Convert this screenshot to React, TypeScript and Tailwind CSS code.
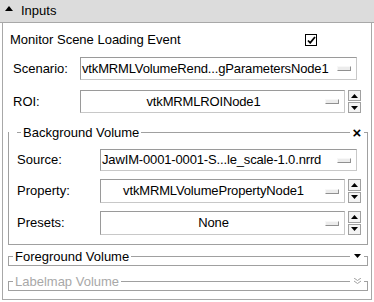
import React from 'react';

const font = { fontFamily: '"Liberation Sans", Arial, sans-serif' };

const Indicator = () => (
  <span className="w-[14px] h-[5px] bg-[#ececec] border border-t-[#f8f8f8] border-l-[#f8f8f8] border-b-[#909090] border-r-[#909090] shrink-0" />
);

const Spin = () => (
  <div className="flex flex-col w-[13px] h-full ml-[3px] gap-[1px] shrink-0">
    <div className="flex-1 border border-[#a0a0a0] bg-[#f4f4f4] flex items-center justify-center">
      <svg width="7" height="4" viewBox="0 0 7 4"><path d="M3.5 0L7 4H0z" fill="#000" /></svg>
    </div>
    <div className="flex-1 border border-[#a0a0a0] bg-[#f4f4f4] flex items-center justify-center">
      <svg width="7" height="4" viewBox="0 0 7 4"><path d="M0 0H7L3.5 4z" fill="#000" /></svg>
    </div>
  </div>
);

const Combo = ({ text, center, spin, h = 'h-[23px]', w }: { text: string; center?: boolean; spin?: boolean; h?: string; w: string }) => (
  <div className={`flex ${h}`}>
    <div className={`${w} flex items-center border border-[#9a9a9a] border-r-[#c8c8c8] border-b-[#c8c8c8] bg-white pl-[1px] pr-[5px]`}>
      <span className={`flex-1 text-[13px] tracking-[-0.15px] text-black whitespace-nowrap ${center ? 'text-center' : ''}`}>{text}</span>
      <Indicator />
    </div>
    {spin && <Spin />}
  </div>
);

const Legend = ({ title, right, dim }: { title: string; right: React.ReactNode; dim?: boolean }) => (
  <legend className="w-full h-[16px] flex items-center">
    <span className="w-[4px] border-t border-[#a0a0a0]" />
    <span className={`text-[13px] px-[2px] leading-none ${dim ? 'text-[#a8a8a8]' : 'text-black'}`}>{title}</span>
    <span className="flex-1 border-t border-[#a0a0a0]" />
    <span className="w-[14px] flex justify-center">{right}</span>
    <span className="w-[3px] border-t border-[#a0a0a0]" />
  </legend>
);

export default function App() {
  return (
    <div className="w-[374px] h-[302px] bg-white overflow-hidden" style={font}>
      <div className="h-[23px] bg-[#dcdcdc] border-b border-[#a8a8a8] flex items-center">
        <svg width="8" height="5" viewBox="0 0 8 5" className="ml-[5px] mb-[6px]"><path d="M4 0L8 5H0z" fill="#000" /></svg>
        <span className="ml-[8px] text-[13px] text-black">Inputs</span>
      </div>
      <div className="ml-[2px] w-[370px] border-x border-b border-[#a8a8a8] pl-[5px] pr-[3px] pb-[8px] flex flex-col">
        <div className="mt-[7px] h-[20px] flex items-center">
          <span className="ml-[2px] text-[13px] text-black">Monitor Scene Loading Event</span>
          <div className="ml-auto mr-[51px] w-[12px] h-[12px] border border-black bg-white flex items-center justify-center">
            <svg width="9" height="8" viewBox="0 0 9 8"><path d="M1 4.5L3.2 6.8L8 1" stroke="#000" strokeWidth="1.8" fill="none" /></svg>
          </div>
        </div>
        <div className="mt-[7px] flex items-center">
          <span className="w-[72px] pl-[5px] text-[13px] text-black">Scenario:</span>
          <Combo w="w-[277px]" text="vtkMRMLVolumeRend...gParametersNode1" />
        </div>
        <div className="mt-[10px] flex items-center">
          <span className="w-[72px] pl-[5px] text-[13px] text-black">ROI:</span>
          <Combo w="w-[265px]" text="vtkMRMLROINode1" center spin />
        </div>
        <fieldset className="mt-[11px] border-x border-b border-[#a0a0a0] pl-[8px] pb-[9px] flex flex-col">
          <Legend title="Background Volume" right={<span className="text-[15px] leading-none font-bold text-black">×</span>} />
          <div className="mt-[9px] flex items-center">
            <span className="w-[83px] text-[13px] text-black">Source:</span>
            <Combo w="w-[257px]" h="h-[22px]" text="JawIM-0001-0001-S...le_scale-1.0.nrrd" />
          </div>
          <div className="mt-[8px] flex items-center">
            <span className="w-[83px] text-[13px] text-black">Property:</span>
            <Combo w="w-[245px]" h="h-[24px]" text="vtkMRMLVolumePropertyNode1" center spin />
          </div>
          <div className="mt-[8px] flex items-center">
            <span className="w-[83px] text-[13px] text-black">Presets:</span>
            <Combo w="w-[245px]" h="h-[24px]" text="None" center spin />
          </div>
        </fieldset>
        <fieldset className="mt-[3px] h-[18px] border-x border-b border-[#a0a0a0]">
          <Legend title="Foreground Volume" right={<svg width="7" height="4" viewBox="0 0 7 4"><path d="M0 0H7L3.5 4z" fill="#000" /></svg>} />
        </fieldset>
        <fieldset className="mt-[7px] h-[18px] border-x border-b border-[#a0a0a0]">
          <Legend dim title="Labelmap Volume" right={<svg width="7" height="6" viewBox="0 0 7 6"><path d="M0 0L3.5 2.5L7 0M0 3L3.5 5.5L7 3" stroke="#a0a0a0" fill="none" /></svg>} />
        </fieldset>
      </div>
    </div>
  );
}
